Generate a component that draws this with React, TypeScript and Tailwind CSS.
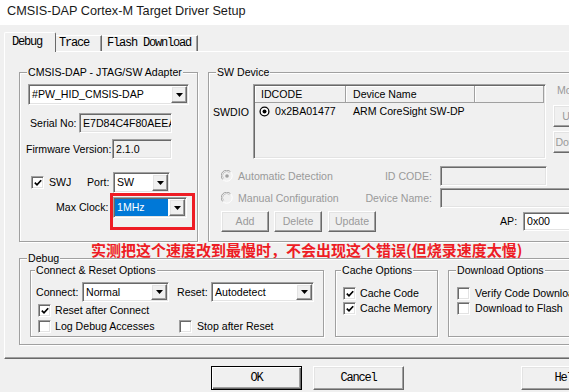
import React from 'react';

const sunken =
  'border border-t-[#a0a0a0] border-l-[#a0a0a0] border-b-white border-r-white shadow-[inset_1px_1px_0_#696969,inset_-1px_-1px_0_#e3e3e3]';
const raised =
  'border border-t-white border-l-white border-b-[#696969] border-r-[#696969] shadow-[inset_-1px_-1px_0_#a0a0a0,inset_1px_1px_0_#e3e3e3]';

function Arrow() {
  return (
    <svg width="7" height="4" viewBox="0 0 7 4">
      <path d="M0 0h7L3.5 4z" fill="#000" />
    </svg>
  );
}

function Combo({ value, className = '', selected }: { value: string; className?: string; selected?: boolean }) {
  return (
    <div className={`${sunken} bg-white p-[1px] flex shrink-0 ${className}`}>
      <div className={`flex-1 flex items-center pl-[2px] whitespace-nowrap ${selected ? 'bg-[#0078d7] text-white' : ''}`}>{value}</div>
      <div className={`${raised} bg-[#f0f0f0] w-[16px] ml-[1px] flex items-center justify-center`}>
        <Arrow />
      </div>
    </div>
  );
}

function Field({ value = '', className = '', white }: { value?: string; className?: string; white?: boolean }) {
  return (
    <div className={`${sunken} ${white ? 'bg-white' : 'bg-[#f0f0f0]'} flex items-center pl-[3px] overflow-hidden whitespace-nowrap shrink-0 ${className}`}>
      {value}
    </div>
  );
}

function Check({ checked }: { checked?: boolean }) {
  return (
    <div className={`${sunken} bg-white w-[13px] h-[13px] shrink-0 flex items-center justify-center`}>
      {checked && (
        <svg width="8" height="8" viewBox="0 0 8 8">
          <path d="M0.8 3.6 L3 5.8 L7.2 1.2" stroke="#000" strokeWidth="1.7" fill="none" />
        </svg>
      )}
    </div>
  );
}

function GrayRadio({ checked }: { checked?: boolean }) {
  return (
    <svg width="12" height="12" viewBox="0 0 12 12" className="shrink-0">
      <circle cx="6" cy="6" r="5" fill="#f0f0f0" />
      <path d="M1.8 9.6 A5 5 0 0 1 9.6 1.8" stroke="#a0a0a0" strokeWidth="1" fill="none" />
      <path d="M9.6 1.8 A5 5 0 0 1 1.8 9.6" stroke="#ffffff" strokeWidth="1" fill="none" />
      <path d="M2.8 8.6 A4 4 0 0 1 8.6 2.8" stroke="#c8c8c8" strokeWidth="1" fill="none" />
      {checked && <circle cx="6" cy="6" r="1.8" fill="#a0a0a0" />}
    </svg>
  );
}

function DotRadio() {
  return (
    <svg width="11" height="11" viewBox="0 0 11 11" className="shrink-0">
      <circle cx="5.5" cy="5.5" r="4.4" fill="#fff" stroke="#000" strokeWidth="1.3" />
      <circle cx="5.5" cy="5.5" r="2" fill="#000" />
    </svg>
  );
}

function Group({
  label,
  labelPos,
  className = '',
  children,
}: {
  label: string;
  labelPos: string;
  className?: string;
  children?: React.ReactNode;
}) {
  return (
    <div className={`relative shrink-0 border border-[#a0a0a0] shadow-[inset_1px_1px_0_#fff,1px_1px_0_#fff] ${className}`}>
      <span className={`absolute -top-[7px] ${labelPos} px-[1px] bg-[#f0f0f0] leading-[13px] whitespace-nowrap`}>{label}</span>
      {children}
    </div>
  );
}

function SmallBtn({ label, className = '' }: { label: string; className?: string }) {
  return (
    <div className={`${raised} bg-[#f0f0f0] text-[#9a9a9a] flex items-center justify-center shrink-0 whitespace-nowrap ${className}`}>
      {label}
    </div>
  );
}

export default function App() {
  return (
    <div className="w-[569px] h-[392px] overflow-hidden bg-[#f0f0f0] text-black font-['Liberation_Sans',sans-serif] text-[10.6px] leading-[13px] whitespace-nowrap">
      {/* title */}
      <div className="h-[25px] bg-white flex items-center pl-[7px] pb-[2px] text-[12.7px] text-[#1a1a1a]">
        CMSIS-DAP Cortex-M Target Driver Setup
      </div>

      {/* tabs */}
      <div className="h-[26px] flex items-end pl-[4px] font-['Liberation_Mono',monospace] text-[12px] tracking-[-1.2px]">
        <div className="relative z-10 -mb-px h-[20px] w-[52px] shrink-0 bg-[#f0f0f0] border-t border-l border-r border-t-white border-l-white border-r-[#696969] rounded-t-[2px] pl-[7px] flex items-center">
          Debug
        </div>
        <div className="h-[16px] w-[46px] shrink-0 border-t border-r border-t-white border-r-[#696969] shadow-[inset_-1px_0_0_#a0a0a0] pl-[3px] flex items-center">
          Trace
        </div>
        <div className="h-[16px] w-[96px] shrink-0 border-t border-r border-t-white border-r-[#696969] shadow-[inset_-1px_0_0_#a0a0a0] pl-[5px] flex items-center">
          Flash Download
        </div>
      </div>

      {/* tab page */}
      <div className="ml-[4px] w-[600px] border-t border-l border-b border-t-white border-l-white border-b-[#696969] shadow-[inset_0_-1px_0_#a0a0a0] pt-[20px] pb-[13px]">
        <div className="flex h-[170px]">
          {/* adapter */}
          <Group label="CMSIS-DAP - JTAG/SW Adapter" labelPos="left-[7px]" className="ml-[14px] w-[179px] h-[170px]">
            <div className="flex flex-col">
              <div className="mt-[11px] ml-[8px] flex">
                <Combo value="#PW_HID_CMSIS-DAP" className="w-[161px] h-[21px]" />
              </div>
              <div className="mt-[8px] h-[20px] flex items-center">
                <span className="ml-[10px] w-[49px] shrink-0">Serial No:</span>
                <Field value="E7D84C4F80AEEA" className="w-[93px] h-[20px]" />
              </div>
              <div className="mt-[6px] h-[20px] flex items-center">
                <span className="ml-[6px] w-[86px] shrink-0">Firmware Version:</span>
                <Field value="2.1.0" className="w-[60px] h-[20px]" />
              </div>
              <div className="mt-[13px] h-[21px] flex items-center">
                <div className="ml-[11px]">
                  <Check checked />
                </div>
                <span className="ml-[5px] w-[38px] shrink-0">SWJ</span>
                <span className="w-[26px] shrink-0">Port:</span>
                <Combo value="SW" className="w-[57px] h-[21px]" />
              </div>
              <div className="mt-[4px] h-[21px] flex items-center">
                <span className="ml-[36px] w-[57px] shrink-0">Max Clock:</span>
                <Combo value="1MHz" selected className="w-[74px] h-[21px]" />
              </div>
            </div>
            <div className="absolute left-[90px] top-[120px] w-[85px] h-[37px] border-[3px] border-[#ee1c24] pointer-events-none" />
          </Group>

          {/* SW device */}
          <Group label="SW Device" labelPos="left-[7px]" className="ml-[10px] w-[380px] h-[170px]">
            <div className="flex flex-col">
              <div className="mt-[11px] flex items-start">
                <span className="w-[44px] shrink-0 pl-[4px] mt-[22px]">SWDIO</span>
                <div className={`${sunken} bg-[#f0f0f0] p-[1px] w-[293px] h-[75px] shrink-0 flex flex-col`}>
                  <div className="h-[17px] flex">
                    <div className="w-[91px] shrink-0 border-r border-b border-[#a0a0a0] shadow-[inset_1px_1px_0_#fff] pl-[6px] flex items-center">IDCODE</div>
                    <div className="w-[129px] shrink-0 border-r border-b border-[#a0a0a0] shadow-[inset_1px_1px_0_#fff] pl-[7px] flex items-center">Device Name</div>
                    <div className="flex-1 border-r border-b border-[#a0a0a0] shadow-[inset_1px_1px_0_#fff]" />
                  </div>
                  <div className="h-[17px] flex items-center pl-[4px]">
                    <DotRadio />
                    <span className="ml-[5px] w-[78px] shrink-0">0x2BA01477</span>
                    <span>ARM CoreSight SW-DP</span>
                  </div>
                </div>
                <div className="ml-[7px] flex flex-col shrink-0">
                  <span className="h-[13px] pl-[4px] text-[#9a9a9a]">Move</span>
                  <SmallBtn label="Up" className="mt-[8px] w-[32px] h-[22px]" />
                  <SmallBtn label="Down" className="mt-[4px] w-[32px] h-[22px]" />
                </div>
              </div>

              <div className="mt-[7px] h-[20px] flex items-center text-[#9a9a9a]">
                <div className="w-[231px] shrink-0 flex items-center">
                  <div className="ml-[12px]">
                    <GrayRadio checked />
                  </div>
                  <span className="ml-[5px] shrink-0">Automatic Detection</span>
                  <span className="ml-auto mr-[8px] shrink-0">ID CODE:</span>
                </div>
                <Field className="w-[107px] h-[20px]" />
              </div>
              <div className="mt-[2px] h-[20px] flex items-center text-[#9a9a9a]">
                <div className="w-[231px] shrink-0 flex items-center">
                  <div className="ml-[12px]">
                    <GrayRadio />
                  </div>
                  <span className="ml-[5px] shrink-0">Manual Configuration</span>
                  <span className="ml-auto mr-[8px] shrink-0">Device Name:</span>
                </div>
                <Field className="w-[200px] h-[20px]" />
              </div>
              <div className="mt-[3px] h-[21px] flex items-center">
                <SmallBtn label="Add" className="ml-[12px] w-[48px] h-[21px]" />
                <SmallBtn label="Delete" className="ml-[5px] w-[48px] h-[21px]" />
                <SmallBtn label="Update" className="ml-[6px] w-[48px] h-[21px]" />
                <span className="ml-[124px] w-[23px] shrink-0">AP:</span>
                <Field value="0x00" white className="w-[80px] h-[19px]" />
              </div>
            </div>
          </Group>
        </div>

        {/* annotation */}
        <div className="h-[16px] ml-[86px] leading-[16px] text-[15px] font-bold text-[#ee1c24] font-['Noto_Sans_CJK_SC',sans-serif]">
          实测把这个速度改到最慢时，不会出现这个错误(但烧录速度太慢)
        </div>

        {/* debug */}
        <Group label="Debug" labelPos="left-[7px]" className="ml-[14px] w-[560px] h-[87px]">
          <div className="mt-[11px] ml-[10px] flex">
            <Group label="Connect & Reset Options" labelPos="left-[4px]" className="w-[294px] h-[67px]">
              <div className="flex flex-col">
                <div className="mt-[11px] h-[20px] flex items-center">
                  <span className="ml-[5px] w-[46px] shrink-0">Connect:</span>
                  <Combo value="Normal" className="w-[87px] h-[20px]" />
                  <span className="ml-[8px] w-[34px] shrink-0">Reset:</span>
                  <Combo value="Autodetect" className="w-[103px] h-[20px]" />
                </div>
                <div className="mt-[2px] h-[13px] flex items-center">
                  <div className="ml-[7px]">
                    <Check checked />
                  </div>
                  <span className="ml-[4px]">Reset after Connect</span>
                </div>
                <div className="mt-[3px] h-[13px] flex items-center">
                  <div className="ml-[7px]">
                    <Check />
                  </div>
                  <span className="ml-[4px] w-[124px] shrink-0">Log Debug Accesses</span>
                  <Check />
                  <span className="ml-[5px]">Stop after Reset</span>
                </div>
              </div>
            </Group>
            <Group label="Cache Options" labelPos="left-[5px]" className="ml-[11px] w-[103px] h-[67px]">
              <div className="flex flex-col">
                <div className="mt-[16px] h-[13px] flex items-center">
                  <div className="ml-[7px]">
                    <Check checked />
                  </div>
                  <span className="ml-[4px]">Cache Code</span>
                </div>
                <div className="mt-[2px] h-[13px] flex items-center">
                  <div className="ml-[7px]">
                    <Check checked />
                  </div>
                  <span className="ml-[4px]">Cache Memory</span>
                </div>
              </div>
            </Group>
            <Group label="Download Options" labelPos="left-[7px]" className="ml-[10px] w-[200px] h-[67px]">
              <div className="flex flex-col">
                <div className="mt-[16px] h-[13px] flex items-center">
                  <div className="ml-[8px]">
                    <Check />
                  </div>
                  <span className="ml-[5px]">Verify Code Download</span>
                </div>
                <div className="mt-[2px] h-[13px] flex items-center">
                  <div className="ml-[8px]">
                    <Check />
                  </div>
                  <span className="ml-[5px]">Download to Flash</span>
                </div>
              </div>
            </Group>
          </div>
        </Group>
      </div>

      {/* dialog buttons */}
      <div className="mt-[7px] flex pl-[211px] font-['Liberation_Mono',monospace] text-[12px] tracking-[-1.2px]">
        <div className="w-[91px] h-[24px] shrink-0 border border-black bg-[#f0f0f0] shadow-[inset_1px_1px_0_#fff,inset_-1px_-1px_0_#696969,inset_-2px_-2px_0_#a0a0a0] flex items-center justify-center">
          OK
        </div>
        <div className={`${raised} ml-[11px] w-[91px] h-[24px] shrink-0 bg-[#f0f0f0] flex items-center justify-center`}>Cancel</div>
        <div className={`${raised} ml-[117px] w-[91px] h-[24px] shrink-0 bg-[#f0f0f0] flex items-center justify-center`}>Help</div>
      </div>
    </div>
  );
}
